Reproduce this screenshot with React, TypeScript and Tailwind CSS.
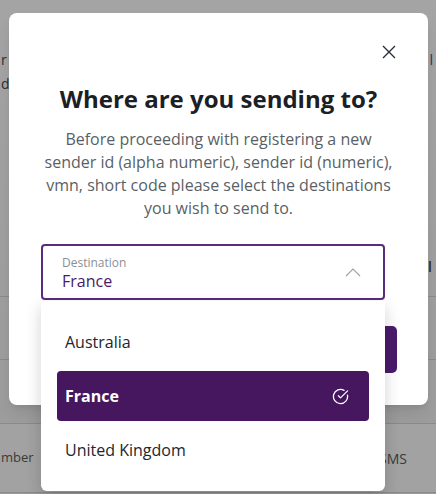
import { CircleCheckBig } from "lucide-react";

const options = ["Australia", "France", "United Kingdom"];

export default function App() {
    const selected = "France";

    return (
        <div
            className="relative h-[494px] w-[436px] overflow-hidden bg-gradient-to-b from-[#a4a4a4] to-[#9b9b9b]"
            style={{ fontFamily: '"Open Sans", "Noto Sans", sans-serif' }}
        >
            {/* page behind the overlay */}
            <div className="flex flex-col text-[14px] text-[#2e2e2e]">
                <div className="flex h-[48px]" />
                <div className="flex h-[22px] items-center justify-between pl-[1px] pr-[3px]">
                    <span>r</span>
                    <span className="text-[#1d3566]">l</span>
                </div>
                <div className="flex h-[26px] items-center pl-[1px]">
                    <span>de</span>
                </div>
                <div className="h-[158px]" />
                <div className="flex h-[24px] items-center justify-end pr-[4px]">
                    <span className="font-semibold">el</span>
                </div>
                <div className="h-[18px]" />
                <div className="h-[63px] border-t border-[#8a8a8a]" />
                <div className="h-[64px] border-t border-[#8a8a8a]" />
                <div className="flex h-[69px] items-center justify-between border-t border-[#8a8a8a] bg-[#a2a2a2] pl-[1px] pr-[29px] text-[13px] text-[#3a3a3a]">
                    <span>mber</span>
                    <span className="text-[14px]">SMS</span>
                </div>
                <div className="border-t border-[#8a8a8a]" />
            </div>

            {/* modal */}
            <div className="absolute left-[9px] top-[13px] flex h-[392px] w-[419px] flex-col rounded-lg bg-white shadow-lg">
                <div className="flex justify-end pr-[32px] pt-[32px]">
                    <svg width="14" height="14" viewBox="0 0 14 14" fill="none" stroke="#2a2e38" strokeWidth="1.4">
                        <path d="M1 1 13 13M13 1 1 13" />
                    </svg>
                </div>
                <h2 className="mt-[24px] text-center text-[24px] font-bold leading-[32px] text-[#1b2027]">
                    Where are you sending to?
                </h2>
                <p className="mx-auto mt-[13px] w-[354px] text-center text-[16px] leading-[23px] text-[#5a5f66]">
                    Before proceeding with registering a new sender id (alpha numeric), sender id (numeric), vmn, short code please select the destinations you wish to send to.
                </p>
                <div className="ml-[32px] mt-[24px] flex h-[56px] w-[344px] justify-between rounded-[4px] border-2 border-[#5b2b7d] pl-[19px] pr-[22px]">
                    <div className="flex flex-col pt-[9px]">
                        <span className="text-[12px] leading-[15px] text-[#8b9096]">Destination</span>
                        <span className="text-[16px] font-medium leading-[22px] text-[#4a1a66]">France</span>
                    </div>
                    <svg className="self-center" width="16" height="9" viewBox="0 0 16 9" fill="none" stroke="#9ba1a7" strokeWidth="1.1">
                        <path d="M1 8 8 1l7 7" />
                    </svg>
                </div>
                <div className="ml-[32px] mt-[26px] h-[47px] w-[356px] rounded-[5px] bg-[#4a1a6b]" />
            </div>

            {/* open dropdown */}
            <div className="absolute left-[41px] top-[301px] flex w-[344px] flex-col gap-[4px] rounded-b-md bg-white px-4 pb-4 pt-4 shadow-[0_6px_16px_rgba(0,0,0,0.18)]">
                {options.map((o) =>
                    o === selected ? (
                        <div
                            key={o}
                            className="flex h-[50px] items-center justify-between rounded-[4px] bg-[#46165f] pl-[8px] pr-[20px] text-[16px] font-bold text-white"
                        >
                            <span>{o}</span>
                            <CircleCheckBig size={17} strokeWidth={1.8} />
                        </div>
                    ) : (
                        <div key={o} className="flex h-[50px] items-center pl-[8px] text-[16px] font-medium text-[#23262b]">
                            {o}
                        </div>
                    )
                )}
            </div>
        </div>
    );
}
